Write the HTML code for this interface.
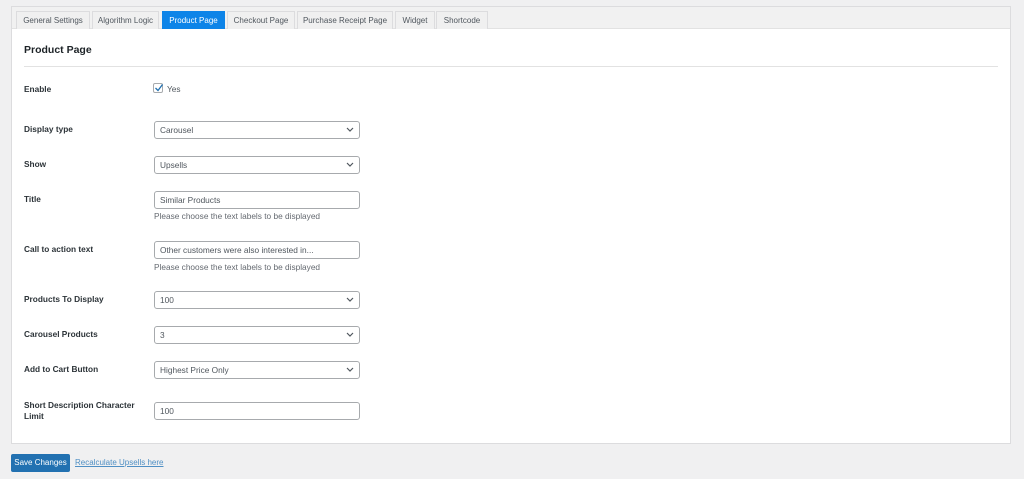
<!DOCTYPE html>
<html><head><style>
*{box-sizing:border-box}
body{margin:0;width:1024px;height:479px;background:#f0f0f1;font-family:"Liberation Sans",sans-serif;font-size:8.5px;color:#3c434a;position:relative;overflow:hidden}
.panel{position:absolute;left:11px;top:6px;width:1000px;height:438px;background:#fff;border:1px solid #dcdcde}
.tabbar{position:absolute;left:0;top:0;width:998px;height:22px;background:#f1f1f1;border-bottom:1px solid #e2e2e2}
.tab{position:absolute;top:4px;height:18px;background:#f0f0f0;border:1px solid #dcdcde;border-bottom:none;color:#50575e;font-size:8px;text-align:center;line-height:17px}
.tab.a{background:#0d84e8;color:#fff;border-color:#0d84e8}
.abs{position:absolute}
h2{position:absolute;left:24px;top:44px;margin:0;font-size:10.5px;font-weight:bold;color:#1d2327}
.hr{position:absolute;left:24px;top:66px;width:974px;height:1px;background:#e2e2e2}
.lbl{position:absolute;left:24px;font-weight:bold;color:#2c3338;font-size:8.3px;line-height:11px}
.in{position:absolute;left:154px;width:206px;height:18px;border:1px solid #a7aaad;border-radius:3px;background:#fff;padding-left:5px;line-height:16px;color:#50575e;font-size:8.3px}
.in svg{position:absolute;right:5px;top:5px}
.help{position:absolute;left:154px;color:#646970;font-size:8.3px}
.btn{position:absolute;left:11px;top:454px;width:59px;height:18px;background:#2271b1;border-radius:2px;color:#fff;font-size:8px;text-align:center;line-height:18px}
.lnk{position:absolute;left:75px;top:458px;color:#4f8fc4;text-decoration:underline;font-size:8px}
</style></head><body>
<div class="panel">
<div class="tabbar"></div>
<div class="tab" style="left:4px;width:74px">General Settings</div>
<div class="tab" style="left:80px;width:67px">Algorithm Logic</div>
<div class="tab a" style="left:150px;width:63px">Product Page</div>
<div class="tab" style="left:215px;width:68px">Checkout Page</div>
<div class="tab" style="left:285px;width:96px">Purchase Receipt Page</div>
<div class="tab" style="left:383px;width:40px">Widget</div>
<div class="tab" style="left:424px;width:52px">Shortcode</div>
</div>
<h2>Product Page</h2>
<div class="hr"></div>
<div class="lbl" style="top:84px">Enable</div>
<div class="abs" style="left:153px;top:83px;width:10px;height:10px;border:1px solid #a7aaad;border-radius:2px;background:#fff"><svg width="10" height="10" style="position:absolute;left:0;top:-1px"><path d="M1.5 5 L4 7.5 L8.5 1.5" stroke="#2271b1" stroke-width="1.3" fill="none"/></svg></div>
<div class="abs" style="left:167px;top:84px;font-size:8.3px;color:#50575e">Yes</div>

<div class="lbl" style="top:124px">Display type</div>
<div class="in" style="top:121px">Carousel<svg width="8" height="6"><path d="M1 1l3 3 3-3" stroke="#50575e" stroke-width="1.2" fill="none"/></svg></div>
<div class="lbl" style="top:159px">Show</div>
<div class="in" style="top:156px">Upsells<svg width="8" height="6"><path d="M1 1l3 3 3-3" stroke="#50575e" stroke-width="1.2" fill="none"/></svg></div>
<div class="lbl" style="top:194px">Title</div>
<div class="in" style="top:191px">Similar Products</div>
<div class="help" style="top:211px">Please choose the text labels to be displayed</div>
<div class="lbl" style="top:244px">Call to action text</div>
<div class="in" style="top:241px">Other customers were also interested in...</div>
<div class="help" style="top:262px">Please choose the text labels to be displayed</div>
<div class="lbl" style="top:294px">Products To Display</div>
<div class="in" style="top:291px">100<svg width="8" height="6"><path d="M1 1l3 3 3-3" stroke="#50575e" stroke-width="1.2" fill="none"/></svg></div>
<div class="lbl" style="top:329px">Carousel Products</div>
<div class="in" style="top:326px">3<svg width="8" height="6"><path d="M1 1l3 3 3-3" stroke="#50575e" stroke-width="1.2" fill="none"/></svg></div>
<div class="lbl" style="top:364px">Add to Cart Button</div>
<div class="in" style="top:361px">Highest Price Only<svg width="8" height="6"><path d="M1 1l3 3 3-3" stroke="#50575e" stroke-width="1.2" fill="none"/></svg></div>
<div class="lbl" style="top:400px">Short Description Character<br>Limit</div>
<div class="in" style="top:402px">100</div>
<div class="btn">Save Changes</div>
<div class="lnk">Recalculate Upsells here</div>
</body></html>
